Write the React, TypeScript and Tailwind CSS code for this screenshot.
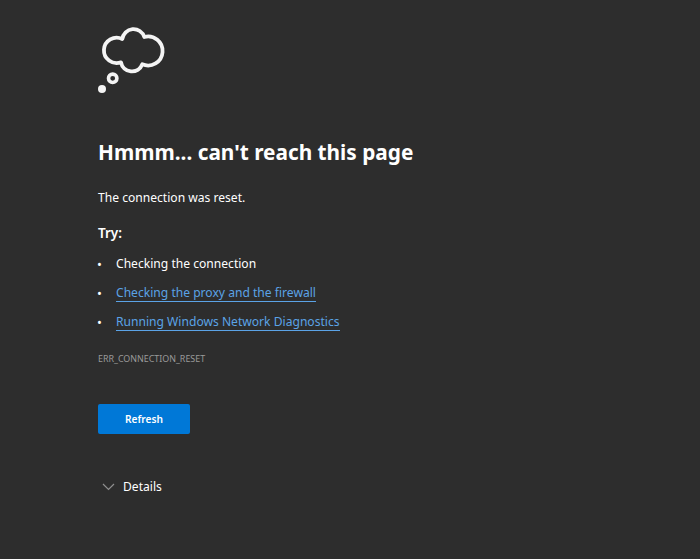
import React from 'react';

function CloudIcon() {
  return (
    <svg width="70" height="70" viewBox="0 0 70 70" fill="none" className="block">
      <path
        d="M24.3 14A11.3 11.3 0 0 1 46.3 12A14.5 14.5 0 1 1 44.3 39.3A11.1 11.1 0 0 1 23 37.3A12.7 12.7 0 1 1 24.3 14Z"
        stroke="#f4f4f4"
        strokeWidth="3.8"
        strokeLinejoin="round"
      />
      <circle cx="14.7" cy="53.3" r="4.2" stroke="#f4f4f4" strokeWidth="3.6" />
      <circle cx="4" cy="64" r="4" fill="#f4f4f4" />
    </svg>
  );
}

function TryItem({ label, href }: { label: string; href?: boolean }) {
  return (
    <li className="flex items-start h-[29px]">
      <span className="w-[19px] -ml-px text-white text-[13px] leading-[20px]">•</span>
      {href ? (
        <a className="text-[#5ba3e6] border-b border-[#5ba3e6] leading-[20px] h-[19px]">{label}</a>
      ) : (
        <span className="text-white leading-[20px]">{label}</span>
      )}
    </li>
  );
}

export default function App() {
  return (
    <div className="min-h-[559px] bg-[#2d2d2d] pl-[98px] pt-[25px] font-['Noto_Sans','Open_Sans',sans-serif] text-[12.1px] text-white">
      <CloudIcon />

      <h1 className="mt-[42px] text-[20.8px] leading-[30px] font-bold">Hmmm... can't reach this page</h1>

      <p className="mt-[21px] leading-[20px]">The connection was reset.</p>

      <p className="mt-[15px] text-[13.5px] leading-[20px] font-semibold">Try:</p>

      <ul className="mt-[11px]">
        <TryItem label="Checking the connection" />
        <TryItem label="Checking the proxy and the firewall" href />
        <TryItem label="Running Windows Network Diagnostics" href />
      </ul>

      <div className="mt-[10.5px] text-[8.9px] leading-[14px] text-[#9a9a9a]">ERR_CONNECTION_RESET</div>

      <button className="mt-[38px] block w-[92px] h-[30px] pt-[2px] rounded-[2px] bg-[#0078d7] text-[10.2px] font-semibold text-white">
        Refresh
      </button>

      <div className="mt-[43px] flex items-center">
        <svg width="13" height="8" viewBox="0 0 13 8" fill="none" className="ml-[4px]">
          <path d="M1 1L6.5 6.5L12 1" stroke="#8f8f8f" strokeWidth="1.2" />
        </svg>
        <span className="ml-[8px] leading-[20px]">Details</span>
      </div>
    </div>
  );
}
